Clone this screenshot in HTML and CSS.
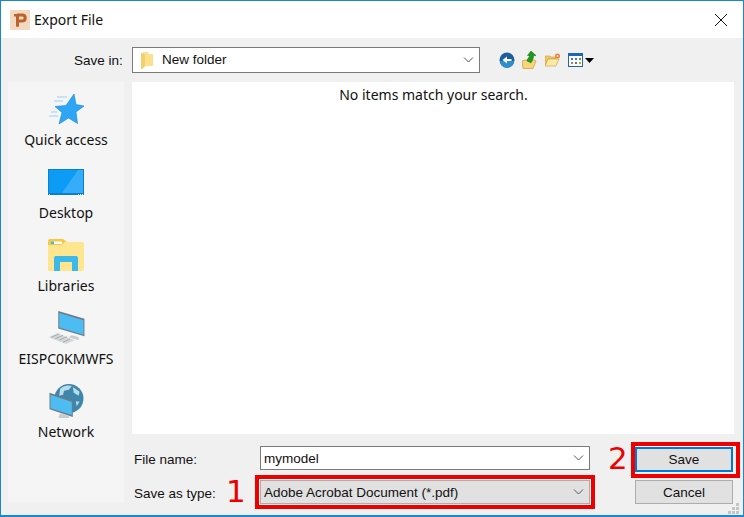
FILE: index.html
```html
<!DOCTYPE html>
<html lang="en">
<head>
<meta charset="utf-8">
<title>Export File</title>
<link rel="stylesheet" href="styles.css">
</head>
<body>
<div class="dialog">
  <header class="titlebar">
    <svg class="app-icon" width="20" height="20" viewBox="0 0 20 20"><rect width="20" height="20" rx="1" fill="#f4d8c2"/><path d="M7.500 15.500V5h4.500c2 0 3.200 1.200 3.200 2.900S14 11 12 11H7.500" stroke="#b8642c" stroke-width="3" fill="none" stroke-linejoin="round" stroke-linecap="round"/><path d="M4 4h4v2.500H4z" fill="#b8642c"/></svg>
    <span class="title">Export File</span>
    <svg class="close" width="14" height="14" viewBox="0 0 14 14"><path d="M1 1l12 12M13 1L1 13" stroke="#111" stroke-width="1" fill="none"/></svg>
  </header>

  <div class="toolbar">
    <label class="savein">Save in:</label>
    <div class="combo folder-combo">
      <svg class="small-folder" width="12" height="17" viewBox="0 0 12 17"><path d="M0 1l5-1h2v2h5v12H4v1l-3 2H0z" fill="#fce08c"/><path d="M0 1l4 1v12l-3 3H0z" fill="#f3cf6f"/></svg>
      <span class="combo-text folder-name">New folder</span>
      <svg class="chev" width="11" height="6" viewBox="0 0 11 6"><path d="M1 .5l4.500 4.500L10 .5" stroke="#555" fill="none"/></svg>
    </div>
    <div class="tools">
      <svg width="16" height="16" viewBox="0 0 16 16"><circle cx="8" cy="8" r="7.500" fill="#1c5f9c"/><path d="M1 9a7 7 0 0 0 14 0z" fill="#2f8fc9"/><path d="M3.500 8L8 4.500V7h4.500v2H8v2.500z" fill="#fff"/></svg>
      <svg width="16" height="18" viewBox="0 0 16 18"><path d="M0 10l3-1h9l2 1-3 7.500H1z" fill="#f5d67a" stroke="#c99a3c" stroke-width=".7"/><path d="M5 10c1-3 2-4 3-5L5.500 4.500 9 0l5 4.500-2.500.3c0 2-1 5-2.500 7z" fill="#1e9a1e" stroke="#0d660d" stroke-width=".5"/></svg>
      <svg width="16" height="14" viewBox="0 0 16 14"><path d="M0 13V3h5l1 1h5v2H3z" fill="#f1c861" stroke="#c99a3c" stroke-width=".6"/><path d="M0 13L3 6h11l-3 7z" fill="#fce9a6" stroke="#c99a3c" stroke-width=".6"/><circle cx="12.500" cy="3" r="2.500" fill="#f0803c"/><circle cx="12.500" cy="3" r="1" fill="#ffe9c0"/></svg>
      <span class="views">
        <svg width="15" height="14" viewBox="0 0 15 14"><rect x=".5" y=".5" width="14" height="13" fill="#fff" stroke="#1f66b0"/><rect x=".5" y=".5" width="14" height="2.500" fill="#1f66b0"/><rect x="3" y="5" width="2" height="2" fill="#3a78c8"/><rect x="7" y="5" width="2" height="2" fill="#3a78c8"/><rect x="11" y="5" width="2" height="2" fill="#48a848"/><rect x="3" y="9" width="2" height="2" fill="#e0702c"/><rect x="7" y="9" width="2" height="2" fill="#3a78c8"/><rect x="11" y="9" width="2" height="2" fill="#d0a020"/></svg>
        <svg width="9" height="5" viewBox="0 0 9 5"><path d="M0 0h9L4.500 5z" fill="#000"/></svg>
      </span>
    </div>
  </div>

  <div class="content">
    <nav class="places">
      <div class="place place-quick">
        <svg width="36" height="30" viewBox="0 0 36 30"><path d="M26 0l2 10.500 8 1.500-8 6 1.500 11.500-9-5.500L11 30l3-11.500L7 12.500l11-1z" fill="#2ea6f5" stroke="#1583d8" stroke-width=".6"/><path d="M9 3h10M6 7h9M1 22h9M3 18h6" stroke="#9fd0f3" stroke-width="1" fill="none"/></svg>
        <span>Quick access</span>
      </div>
      <div class="place">
        <svg width="36" height="26" viewBox="0 0 36 26"><rect width="36" height="26" fill="#0a7fd0"/><rect x="1" y="1" width="34" height="23" fill="#0c9bf5"/><path d="M14 24L30 1h5v23z" fill="#35adf8"/><path d="M1 25.500h2M30 25.500h5" stroke="#fff" stroke-dasharray="1 1"/></svg>
        <span>Desktop</span>
      </div>
      <div class="place">
        <svg width="36" height="32" viewBox="0 0 36 32"><path d="M0 2a2 2 0 0 1 2-2h13l4 3v29H2a2 2 0 0 1-2-2z" fill="#f8c93e"/><path d="M0 6h13l4-3h17a2 2 0 0 1 2 2v25a2 2 0 0 1-2 2H2a2 2 0 0 1-2-2z" fill="#fde68f"/><rect x="3" y="2.500" width="11" height="2.500" fill="#fff"/><rect x="3" y="2.500" width="3" height="2.500" fill="#3db8ea"/><path d="M6 32V19a2 2 0 0 1 2-2h20a2 2 0 0 1 2 2v13h-6V23H12v9z" fill="#3db8ea"/></svg>
        <span>Libraries</span>
      </div>
      <div class="place">
        <svg width="38" height="35" viewBox="0 0 38 35"><path d="M11 0l27 8v18l-27-8z" fill="#6f7b84"/><path d="M12 2l25 7.500v15L12 17z" fill="#4dbcf2"/><path d="M25 25l7 2v3l-10-3z" fill="#c7ccd0"/><path d="M1 27l9-4 18 7-9 4z" fill="#d5d8da"/><path d="M4 27l8-3.500M8 28.500l8-3.500M12 30l8-3.500M16 32l7-3" stroke="#a2a8ad" fill="none"/></svg>
        <span>EISPC0KMWFS</span>
      </div>
      <div class="place">
        <svg width="36" height="35" viewBox="0 0 36 35"><circle cx="21" cy="15" r="15" fill="#3f86ab"/><path d="M12 5c4-4 9-4 12-3l-3 4-5 1-1 4-4 1zM25 3l7 5-1 4-5-3zM28 18h4l-3 5z" fill="#b9dce8"/><path d="M1 9l24 8v17L1 26z" fill="#6f7b84"/><path d="M2 11l22 7.500v13.500L2 25z" fill="#4dbcf2"/><path d="M12 30l9 3v2H10z" fill="#c7ccd0"/></svg>
        <span>Network</span>
      </div>
    </nav>

    <div class="main">
      <div class="listing">No items match your search.</div>
      <div class="footer">
        <div class="labels">
          <label class="field-label">File name:</label>
          <label class="field-label">Save as type:</label>
        </div>
        <div class="number number-one">1</div>
        <div class="inputs">
          <div class="combo name-combo">
            <span class="combo-text">mymodel</span>
            <svg class="chev" width="11" height="6" viewBox="0 0 11 6"><path d="M1 .5l4.500 4.500L10 .5" stroke="#555" fill="none"/></svg>
          </div>
          <div class="combo type-combo">
            <span class="combo-text">Adobe Acrobat Document (*.pdf)</span>
            <svg class="chev" width="11" height="6" viewBox="0 0 11 6"><path d="M1 .5l4.500 4.500L10 .5" stroke="#555" fill="none"/></svg>
          </div>
        </div>
        <div class="number number-two">2</div>
        <div class="buttons">
          <button class="btn btn-save">Save</button>
          <button class="btn btn-cancel">Cancel</button>
        </div>
      </div>
    </div>
  </div>
  <svg class="grip" width="12" height="11" viewBox="0 0 12 11"><path d="M8 0h3v3H8zM4 4h3v3H4zM8 4h3v3H8zM0 8h3v3H0zM4 8h3v3H4zM8 8h3v3H8z" fill="#c4c4c4"/></svg>
</div>
</body>
</html>
```
FILE: styles.css
```css
* { box-sizing: border-box; }
html, body { margin: 0; padding: 0; }
body { width: 744px; height: 517px; overflow: hidden; font-family: "Noto Sans", "Open Sans", sans-serif; color: #111; }
.dialog { position: relative; width: 744px; height: 517px; background: #f0f0f0; border: 1px solid #1a86d8; border-width: 1px 1px 2px 1px; display: flex; flex-direction: column; }
.titlebar { height: 37px; flex: none; background: #fff; display: flex; align-items: center; padding: 0 15px 0 9px; font-size: 14px; }
.app-icon { margin-right: 4px; }
.title { flex: 1; }
.toolbar { height: 44px; flex: none; display: flex; align-items: center; padding-left: 73px; font: 13.5px "Liberation Sans", Arial, sans-serif; }
.savein { width: 58px; }
.combo { display: flex; align-items: center; width: 330px; height: 24px; background: #fff; border: 1px solid #7a7a7a; padding: 0 5px 0 3px; font: 13.5px "Liberation Sans", Arial, sans-serif; }
.combo-text { flex: 1; white-space: nowrap; }
.folder-combo { width: 348px; height: 26px; padding-left: 8px; }
.folder-name { padding-bottom: 2px; }
.small-folder { margin-right: 9px; }
.tools { display: flex; align-items: center; gap: 7px; margin-left: 19px; }
.views { display: flex; align-items: center; gap: 2px; }
.content { flex: 1; display: flex; min-height: 0; padding-left: 7px; padding-right: 9px; }
.places { width: 116px; height: 420px; flex: none; background: #f5f5f5; display: flex; flex-direction: column; align-items: center; padding-top: 10px; font-size: 14px; }
.place { display: flex; flex-direction: column; align-items: center; height: 73px; }
.place svg { flex: none; height: 34px; }
.place span { margin-top: 4px; white-space: nowrap; }
.main { flex: 1; margin-left: 8px; display: flex; flex-direction: column; height: 432px; }
.listing { height: 352px; flex: none; background: #fff; text-align: center; font-size: 14px; padding: 3px 0 0 1px; }
.footer { flex: 1; display: flex; font: 13.5px "Liberation Sans", Arial, sans-serif; padding-top: 12px; }
.labels { width: 128px; display: flex; flex-direction: column; gap: 15px; padding: 4px 0 0 2px; }
.field-label { height: 19px; line-height: 19px; }
.inputs { display: flex; flex-direction: column; gap: 10px; }
.type-combo { background: #e1e1e1; border-color: #adadad; outline: 4px solid #ee0000; outline-offset: 1px; }
.number { position: absolute; color: #ee0000; font: 31px "DejaVu Sans", sans-serif; line-height: 1; }
.number-one { left: 225px; top: 475px; }
.number-two { left: 607px; top: 442px; }
.buttons { margin-left: 45px; margin-top: 1px; display: flex; flex-direction: column; gap: 8px; }
.btn { position: relative; width: 98px; height: 25px; background: #e1e1e1; border: 1px solid #adadad; font: 13.5px "Liberation Sans", Arial, sans-serif; color: #111; padding: 0; }
.btn-cancel { height: 24px; }
.btn-save { border: 2px solid #0078d7; }
.btn-save::after { content: ""; position: absolute; top: -7px; left: -6px; right: -9px; bottom: -8px; border: 4px solid #ee0000; }
.grip { position: absolute; right: 3px; bottom: 1px; }
```
